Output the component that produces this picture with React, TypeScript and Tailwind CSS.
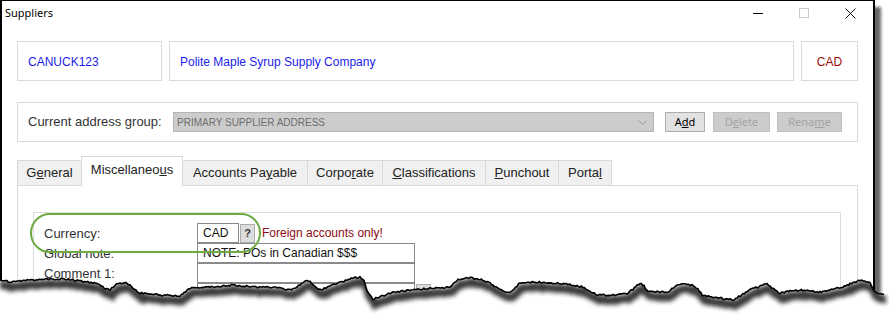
import React from "react";

const KEY: [number, number][] = [
  [-2, 279], [10, 282], [20, 281], [33, 280], [50, 279], [67, 279], [80, 281], [97, 283], [104, 288], [110, 290],
  [115, 285], [120, 283], [127, 283], [133, 288], [140, 293], [160, 295], [180, 296], [187, 290], [193, 288],
  [213, 287], [233, 285], [253, 287], [267, 287], [277, 288], [290, 290], [300, 285], [305, 281], [310, 282],
  [315, 287], [320, 290], [333, 285], [350, 279], [360, 277], [364, 281], [367, 290], [373, 299], [380, 297],
  [390, 293], [410, 290], [433, 288], [450, 287], [455, 282], [460, 279], [470, 278], [480, 279], [490, 283],
  [500, 290], [510, 292], [520, 283], [535, 282], [550, 283], [565, 284], [583, 287], [590, 291], [597, 295],
  [610, 295], [627, 294], [633, 289], [637, 285], [640, 283], [644, 286], [648, 291], [660, 292], [667, 292],
  [675, 287], [680, 284], [693, 285], [698, 289], [702, 295], [710, 297], [720, 298], [733, 300], [740, 296],
  [750, 290], [760, 286], [767, 284], [772, 288], [780, 293], [790, 291], [800, 290], [810, 291], [820, 292],
  [830, 290], [843, 287], [850, 284], [857, 281], [865, 281], [870, 283], [873, 290], [876, 293], [884, 294],
];

function tornLine(): string {
  const pts: string[] = [];
  let k = 0;
  for (let s = 0; s < KEY.length - 1; s++) {
    const [x0, y0] = KEY[s];
    const [x1, y1] = KEY[s + 1];
    const n = Math.max(1, Math.round((x1 - x0) / 1.5));
    for (let i = 0; i < n; i++) {
      const t = i / n;
      const x = x0 + (x1 - x0) * t;
      const r = Math.sin(k * 12.9898 + 4.1) * 43758.5453;
      const j = (r - Math.floor(r) - 0.5) * 1.8;
      const y = y0 + (y1 - y0) * t + (s === 0 && i === 0 ? 0 : j);
      pts.push(`${x.toFixed(1)},${y.toFixed(1)}`);
      k++;
    }
  }
  const last = KEY[KEY.length - 1];
  pts.push(`${last[0]},${last[1]}`);
  return "M" + pts.join(" L");
}

const LINE = tornLine();
const FILL = LINE + " L891,294 L891,324 L-2,324 Z";

function Torn() {
  return (
    <svg className="absolute left-0 top-0 pointer-events-none" width="889" height="322" viewBox="0 0 889 322">
      <defs>
        <filter id="blur" x="-10%" y="-50%" width="120%" height="200%">
          <feGaussianBlur stdDeviation="2" />
        </filter>
        <clipPath id="below">
          <path d={FILL} />
        </clipPath>
      </defs>
      <path d={FILL} fill="#ffffff" />
      <g clipPath="url(#below)">
        <path d={LINE} transform="translate(2,5)" fill="none" stroke="#2e2e2e" strokeWidth="8" opacity="0.95" filter="url(#blur)" />
      </g>
      <path d={LINE} fill="none" stroke="#000" strokeWidth="1.6" strokeLinejoin="round" />
    </svg>
  );
}

const tabs = [
  { pre: "G", u: "e", post: "neral", w: "w-[65px]" },
  { pre: "Miscellaneo", u: "u", post: "s", w: "w-[102px]", active: true },
  { pre: "Accounts Pa", u: "y", post: "able", w: "w-[126px]" },
  { pre: "Corpo", u: "r", post: "ate", w: "w-[76px]" },
  { pre: "", u: "C", post: "lassifications", w: "w-[104px]" },
  { pre: "", u: "P", post: "unchout", w: "w-[74px]" },
  { pre: "Porta", u: "l", post: "", w: "w-[54px]" },
];

function Row({ label, children }: { label: string; children: React.ReactNode }) {
  return (
    <div className="flex h-[20px] items-center">
      <div className="w-[153px] text-[13px] leading-none text-[#333]">{label}</div>
      {children}
    </div>
  );
}

export default function App() {
  return (
    <div className="relative h-[322px] w-[889px] overflow-hidden bg-white font-['Liberation_Sans',Arial,sans-serif]">
      {/* window */}
      <div className="flex h-[322px] w-[875px] flex-col border-x-2 border-t border-black bg-white shadow-[6px_7px_3px_rgba(0,0,0,0.6)]">
        {/* title bar */}
        <div className="flex h-[24px] items-center">
          <div className="pl-[3px] font-['Noto_Sans',sans-serif] text-[11px] text-black">Suppliers</div>
          <div className="ml-auto flex h-full">
            <div className="flex w-[46px] items-center justify-center">
              <div className="h-px w-[10px] bg-black" />
            </div>
            <div className="flex w-[46px] items-center justify-center">
              <div className="h-[10px] w-[10px] border border-[#cccccc]" />
            </div>
            <div className="flex w-[46px] items-center justify-center">
              <svg width="11" height="11" viewBox="0 0 11 11">
                <path d="M0.5 0.5 L10.5 10.5 M10.5 0.5 L0.5 10.5" stroke="#111" strokeWidth="1" />
              </svg>
            </div>
          </div>
        </div>

        <div className="flex flex-1 flex-col pl-[15px] pr-[15px]">
          {/* top row */}
          <div className="mt-[16px] flex h-[40px] gap-[7px] text-[12px]">
            <div className="flex w-[145px] items-center border border-[#dadada] pl-[10px] pt-[2px] text-[#1c1ce8]">CANUCK123</div>
            <div className="flex flex-1 items-center border border-[#dadada] pl-[10px] pt-[2px] text-[#1c1ce8]">
              Polite Maple Syrup Supply Company
            </div>
            <div className="flex w-[57px] items-center justify-center border border-[#dadada] pt-[2px] text-[#9b0a0a]">CAD</div>
          </div>

          {/* address group */}
          <div className="mt-[21px] flex h-[40px] items-center border border-[#dadada] pl-[10px]">
            <div className="w-[145px] text-[13px] text-[#333]">Current address group:</div>
            <div className="flex h-[20px] w-[481px] items-center border border-[#b4b4b4] bg-[#cccccc] pl-[3px] pr-[6px]">
              <span className="text-[10px] text-[#6e6e6e]">PRIMARY SUPPLIER ADDRESS</span>
              <svg className="ml-auto" width="9" height="5" viewBox="0 0 9 5">
                <path d="M0.5 0.5 L4.5 4.5 L8.5 0.5" fill="none" stroke="#9a9a9a" strokeWidth="1" />
              </svg>
            </div>
            <div className="ml-[11px] flex h-[20px] w-[40px] items-center justify-center border border-[#adadad] bg-[#e1e1e1] font-['Noto_Sans',sans-serif] text-[11px] text-black">
              A<span className="underline">d</span>d
            </div>
            <div className="ml-[8px] flex h-[20px] w-[57px] items-center justify-center border border-[#bfbfbf] bg-[#cccccc] font-['Noto_Sans',sans-serif] text-[11px] text-[#a3a3a3]">
              D<span className="underline">e</span>lete
            </div>
            <div className="ml-[7px] flex h-[20px] w-[65px] items-center justify-center border border-[#bfbfbf] bg-[#cccccc] font-['Noto_Sans',sans-serif] text-[11px] text-[#a3a3a3]">
              Rena<span className="underline">m</span>e
            </div>
          </div>

          {/* tabs */}
          <div className="mt-[14px] flex h-[29px] items-end">
            {tabs.map((t, i) => (
              <div
                key={i}
                className={
                  t.active
                    ? `relative z-10 -mb-px -ml-px flex h-[30px] items-center justify-center border-x border-t border-[#d9d9d9] bg-white pb-[3px] text-[13px] text-[#222] ${t.w}`
                    : `flex h-[25px] items-center justify-center border-x border-t border-[#d9d9d9] bg-[#f0f0f0] text-[13px] text-[#222] ${i === 0 ? "" : "-ml-px"} ${t.w}`
                }
              >
                <span>
                  {t.pre}
                  <span className="underline">{t.u}</span>
                  {t.post}
                </span>
              </div>
            ))}
          </div>

          {/* tab panel */}
          <div className="flex flex-1 flex-col border border-[#d9d9d9] pl-[15px] pr-[16px] pt-[26px]">
            <div className="flex-1 border-x border-t border-[#dcdcdc] pl-[10px] pt-[10px]">
              <Row label="Currency:">
                <div className="flex h-[20px] w-[42px] items-center border border-[#8a8a8a] pl-[5px] text-[12px] text-[#111]">CAD</div>
                <div className="ml-px flex h-[19px] w-[15px] items-center justify-center border border-[#adadad] bg-[#dcdcdc] text-[11px] font-bold text-[#333]">
                  ?
                </div>
                <div className="ml-[7px] text-[12px] text-[#8b0a14]">Foreign accounts only!</div>
              </Row>
              <Row label="Global note:">
                <div className="flex h-[20px] w-[218px] items-center border border-[#8a8a8a] pl-[5px] text-[12px] text-[#111]">
                  NOTE: POs in Canadian $$$
                </div>
              </Row>
              <Row label="Comment 1:">
                <div className="h-[20px] w-[218px] border border-[#8a8a8a]" />
              </Row>
              <Row label="Shipping in:">
                <div className="flex h-[20px] w-[218px] items-center border border-[#8a8a8a] pl-[5px] text-[12px] text-[#111]">
                  ADDRESS
                </div>
                <div className="ml-px h-[19px] w-[15px] border border-[#adadad] bg-[#dcdcdc]" />
              </Row>
            </div>
          </div>
        </div>
      </div>

      {/* annotation */}
      <div className="absolute left-[30px] top-[213px] h-[40px] w-[231px] rounded-[20px] border-2 border-[#6fab43]" />

      <Torn />
    </div>
  );
}
